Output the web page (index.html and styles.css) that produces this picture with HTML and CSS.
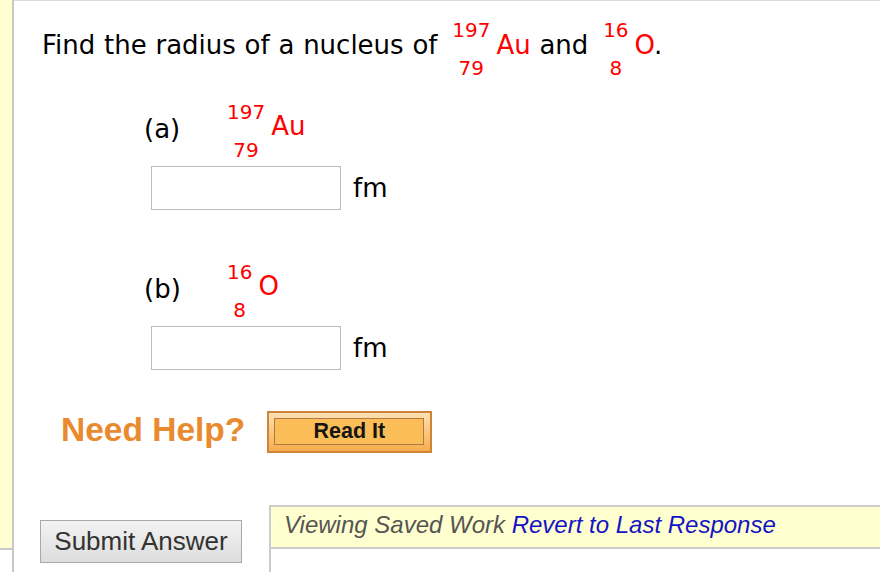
FILE: index.html
```html
<!DOCTYPE html>
<html lang="en">
<head>
<meta charset="utf-8">
<title>Nuclear radius</title>
<link rel="stylesheet" href="styles.css">
</head>
<body>
<div class="page">
  <aside class="sidebar"><div class="sidebar-fill"></div></aside>
  <main class="main">
    <p class="question">Find the radius of a nucleus of <span class="nuclide"><span class="stack"><span class="num">197</span><span class="num">79</span></span><span class="el">Au</span></span> and <span class="nuclide"><span class="stack"><span class="num">16</span><span class="num">8</span></span><span class="el">O</span></span>.</p>

    <div class="part">
      <div class="part-head"><span class="label">(a)</span><span class="nuclide"><span class="stack"><span class="num">197</span><span class="num">79</span></span><span class="el">Au</span></span></div>
      <div class="answer"><input class="field" type="text"><span class="unit">fm</span></div>
    </div>

    <div class="part">
      <div class="part-head"><span class="label">(b)</span><span class="nuclide"><span class="stack"><span class="num">16</span><span class="num">8</span></span><span class="el">O</span></span></div>
      <div class="answer"><input class="field" type="text"><span class="unit">fm</span></div>
    </div>

    <div class="help">
      <span class="need">Need Help?</span>
      <button class="readit" type="button"><span class="readit-inner">Read It</span></button>
    </div>

    <div class="bottom">
      <button class="submit" type="button">Submit Answer</button>
      <div class="saved">
        <div class="notice"><span class="muted">Viewing Saved Work</span> <a class="revert" href="#">Revert to Last Response</a></div>
      </div>
    </div>
  </main>
</div>
</body>
</html>
```

FILE: styles.css
```css
html, body {
  margin: 0;
  padding: 0;
  background: #ffffff;
}

.page {
  display: flex;
  width: 880px;
  height: 572px;
  overflow: hidden;
  font-family: "DejaVu Sans", Verdana, sans-serif;
  color: #000;
}

.sidebar {
  flex: none;
  width: 12px;
  border-right: 2px solid #c8c8c8;
}

.sidebar-fill {
  height: 548px;
  background: #ffffd2;
  border-bottom: 2px solid #c8c8c8;
}

.main {
  flex: 1;
  border-top: 1px solid #dcdcdc;
  padding: 10px 0 0 26px;
}

.question {
  margin: 0;
  height: 82px;
  padding-left: 2px;
  font-size: 26px;
  line-height: 30px;
  word-spacing: 0.5px;
  white-space: nowrap;
}

.nuclide {
  white-space: nowrap;
}

.stack {
  display: inline-block;
  margin-left: 6px;
  font-size: 20px;
  line-height: 38px;
  text-align: center;
  vertical-align: -21px;
  color: #f00;
}

.num {
  display: block;
}

.el {
  margin-left: 6px;
  color: #f00;
}

.part-head {
  height: 73px;
  padding-left: 104px;
  font-size: 26px;
  line-height: 30px;
  white-space: nowrap;
}

.part-head .stack {
  margin-left: 0;
  vertical-align: -22px;
}

.label {
  display: inline-block;
  width: 83px;
  vertical-align: -3px;
}

.answer {
  display: flex;
  align-items: center;
  padding-left: 111px;
  margin-bottom: 43px;
}

.field {
  box-sizing: border-box;
  width: 190px;
  height: 44px;
  margin: 0;
  padding: 0 6px;
  border: 1px solid #bdbdbd;
  background: #fff;
  font-size: 20px;
  outline: none;
}

.unit {
  margin-left: 12px;
  font-size: 26px;
  line-height: 30px;
}

.help {
  display: flex;
  align-items: center;
  margin-top: -2px;
  height: 42px;
}

.need {
  margin-left: 21px;
  margin-bottom: 4px;
  font-family: "Liberation Sans", Arial, sans-serif;
  font-weight: bold;
  font-size: 33.5px;
  line-height: 36px;
  color: #ea8a2e;
}

.readit {
  box-sizing: border-box;
  width: 165px;
  height: 42px;
  margin: 0 0 0 22px;
  padding: 5px 6px 6px 5px;
  border: 2px solid #d0843a;
  background: linear-gradient(#fde2b4, #f6ad4c);
  cursor: pointer;
}

.readit-inner {
  display: flex;
  align-items: center;
  justify-content: center;
  box-sizing: border-box;
  height: 100%;
  border: 1px solid #b27a42;
  background: #fbbd58;
  font-family: "Liberation Sans", Arial, sans-serif;
  font-weight: bold;
  font-size: 21.5px;
  color: #151515;
}

.bottom {
  display: flex;
  align-items: flex-start;
  margin-top: 52px;
}

.submit {
  flex: none;
  box-sizing: border-box;
  width: 202px;
  height: 43px;
  margin: 15px 0 0 0;
  padding: 0;
  border: 1px solid #a9a9a9;
  background: linear-gradient(#f3f3f3, #dddddd);
  font-family: "Liberation Sans", Arial, sans-serif;
  font-size: 26px;
  color: #333;
}

.saved {
  flex: 1;
  margin-left: 27px;
  height: 80px;
  border-left: 2px solid #cccccc;
  border-top: 2px solid #cccccc;
}

.notice {
  height: 36px;
  padding: 0 0 4px 13px;
  line-height: 36px;
  background: #ffffcf;
  border-bottom: 2px solid #cccccc;
  font-family: "Liberation Sans", Arial, sans-serif;
  font-style: italic;
  font-size: 24px;
  white-space: nowrap;
}

.muted {
  color: #555;
}

.revert {
  color: #1414c4;
  text-decoration: none;
}
```
